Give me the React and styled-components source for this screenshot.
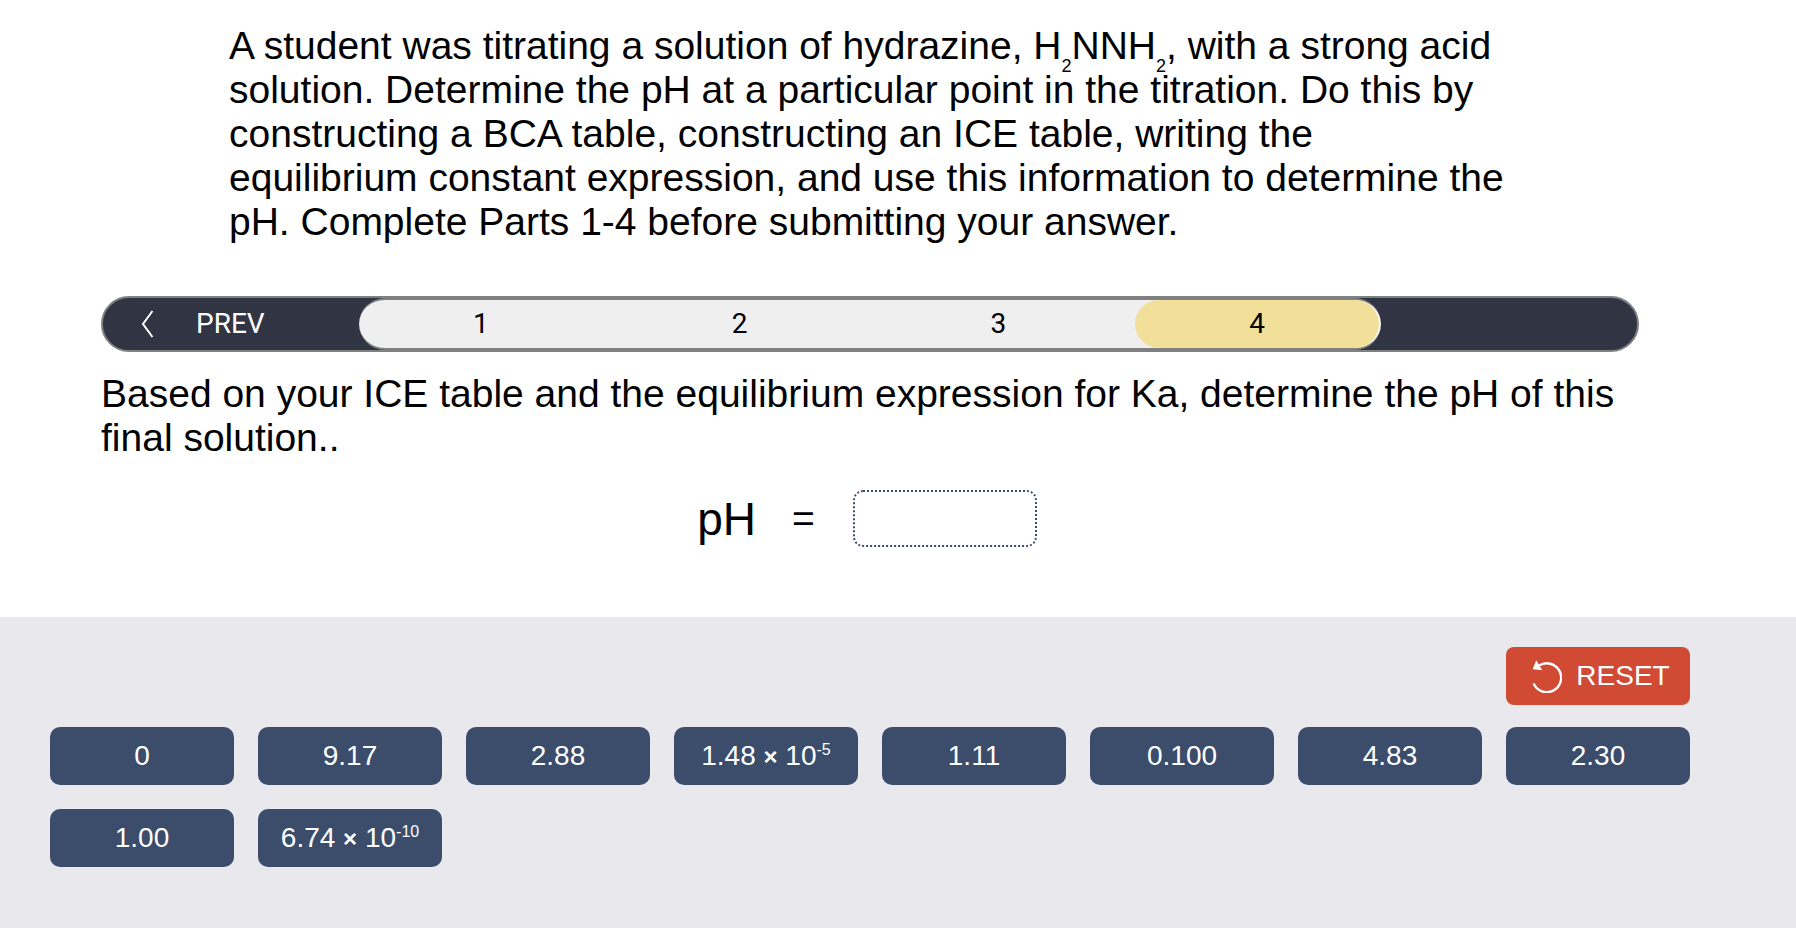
import React, { useState } from "react";
import styled, { createGlobalStyle } from "styled-components";

const GlobalStyle = createGlobalStyle`
  *, *::before, *::after { box-sizing: border-box; }
  html, body, #root { height: 100%; }
  body {
    margin: 0;
    background: #ffffff;
    color: #000000;
    font-family: "Liberation Sans", Arial, sans-serif;
  }
  button, input { font-family: inherit; }
`;

const Page = styled.div`
  min-height: 100%;
  display: flex;
  flex-direction: column;
`;

const Question = styled.main`
  padding: 24px 157px 70px 101px;
`;

const Prompt = styled.p`
  margin: 0 128px;
  font-size: 39px;
  line-height: 44px;
`;

const Instruction = styled(Prompt)`
  margin: 20px 0 0;
`;

const Sub = styled.sub`
  font-size: 18px;
  line-height: 0;
  vertical-align: -13px;
`;

const StepBar = styled.nav`
  display: grid;
  grid-template-columns: minmax(200px, 256fr) 1022fr 256fr;
  height: 56px;
  margin-top: 52px;
  overflow: hidden;
  border: 2px solid #808080;
  border-radius: 28px;
  background: #313543;
  font-family: Roboto, sans-serif;
`;

const PrevButton = styled.button`
  display: flex;
  align-items: center;
  gap: 42px;
  padding: 0 0 0 38px;
  border: 0;
  background: transparent;
  color: #ffffff;
  font-size: 28px;
  line-height: 32px;
  cursor: pointer;
`;

const Steps = styled.div`
  display: grid;
  grid-template-columns: repeat(4, 1fr);
  gap: 15px;
  padding-right: 2px;
  border: solid #808080;
  border-width: 2px 0;
  border-radius: 26px;
  background: linear-gradient(to right, #efefef 80%, #ffffff 95%);
`;

const StepButton = styled.button`
  padding: 0;
  border: 0;
  border-radius: 24px;
  background: ${({ $active }) => ($active ? "#f2df9a" : "transparent")};
  color: #000000;
  font-size: 28px;
  line-height: 32px;
  cursor: pointer;
`;

const Answer = styled.div`
  display: flex;
  align-items: center;
  justify-content: center;
  margin-top: 30px;
  padding-right: 6px;
`;

const AnswerLabel = styled.label`
  font-size: 46px;
  line-height: 56px;
`;

const Equals = styled.span`
  margin: 0 38px 0 36px;
  font-size: 39px;
  line-height: 44px;
`;

const AnswerInput = styled.input`
  width: 184px;
  height: 57px;
  border: 2px dotted #3b4d6b;
  border-radius: 10px;
  background: #ffffff;
  text-align: center;
  font-size: 28px;
`;

const Tray = styled.section`
  flex: 1;
  padding: 30px 106px 50px 50px;
  background: #e9e8ed;
`;

const TrayHeader = styled.div`
  display: flex;
  justify-content: flex-end;
  margin-bottom: 22px;
`;

const TrayButton = styled.button`
  display: flex;
  align-items: center;
  justify-content: center;
  width: 184px;
  height: 58px;
  padding: 0;
  border: 0;
  border-radius: 10px;
  background: #3b4d6b;
  color: #ffffff;
  font-size: 28px;
  line-height: 32px;
  cursor: pointer;
`;

const ResetButton = styled(TrayButton)`
  gap: 14px;
  padding-left: 6px;
  border-radius: 8px;
  background: #d14a34;
`;

const Tiles = styled.div`
  display: grid;
  grid-template-columns: repeat(auto-fill, 184px);
  gap: 24px;
`;

const Times = styled.span`
  font-size: 24px;
  font-weight: bold;
`;

const Sup = styled.sup`
  font-size: 16px;
  line-height: 0;
  vertical-align: 10px;
`;

const STEPS = [1, 2, 3, 4];

const TILES = [
  { value: "0" },
  { value: "9.17" },
  { value: "2.88" },
  { value: "1.48", exponent: "-5" },
  { value: "1.11" },
  { value: "0.100" },
  { value: "4.83" },
  { value: "2.30" },
  { value: "1.00" },
  { value: "6.74", exponent: "-10" },
];

function ChevronLeft() {
  return (
    <svg width="13" height="28" viewBox="0 0 13 28" fill="none" aria-hidden="true">
      <path d="M11.5 1 L2 14 L11.5 27" stroke="#ffffff" strokeWidth="2" />
    </svg>
  );
}

function ResetIcon() {
  return (
    <svg width="30" height="34" viewBox="0 0 30 34" fill="none" aria-hidden="true">
      <path d="M7 6.6 A14.4 14.4 0 1 1 1.6 24.5" stroke="#ffffff" strokeWidth="2.4" />
      <path d="M4.2 1.2 L0.6 10.2 L10.2 11.2 Z" fill="#ffffff" />
    </svg>
  );
}

export default function App() {
  const [step, setStep] = useState(4);
  const [answer, setAnswer] = useState("");

  return (
    <Page>
      <GlobalStyle />
      <Question>
        <Prompt>
          A student was titrating a solution of hydrazine, H<Sub>2</Sub>NNH<Sub>2</Sub>, with a
          strong acid solution. Determine the pH at a particular point in the titration. Do this by
          constructing a BCA table, constructing an ICE table, writing the equilibrium constant
          expression, and use this information to determine the pH. Complete Parts 1-4 before
          submitting your answer.
        </Prompt>
        <StepBar>
          <PrevButton type="button" onClick={() => setStep(Math.max(1, step - 1))}>
            <ChevronLeft />
            PREV
          </PrevButton>
          <Steps>
            {STEPS.map((n) => (
              <StepButton key={n} type="button" $active={n === step} onClick={() => setStep(n)}>
                {n}
              </StepButton>
            ))}
          </Steps>
        </StepBar>
        <Instruction>
          Based on your ICE table and the equilibrium expression for Ka, determine the pH of this
          final solution..
        </Instruction>
        <Answer>
          <AnswerLabel htmlFor="ph">pH</AnswerLabel>
          <Equals>=</Equals>
          <AnswerInput id="ph" value={answer} onChange={(e) => setAnswer(e.target.value)} />
        </Answer>
      </Question>
      <Tray>
        <TrayHeader>
          <ResetButton type="button" onClick={() => setAnswer("")}>
            <ResetIcon />
            RESET
          </ResetButton>
        </TrayHeader>
        <Tiles>
          {TILES.map(({ value, exponent }) => (
            <TrayButton
              key={value}
              type="button"
              onClick={() => setAnswer(exponent ? `${value}e${exponent}` : value)}
            >
              <span>
                {value}
                {exponent && (
                  <>
                    {" "}
                    <Times>×</Times> 10<Sup>{exponent}</Sup>
                  </>
                )}
              </span>
            </TrayButton>
          ))}
        </Tiles>
      </Tray>
    </Page>
  );
}
